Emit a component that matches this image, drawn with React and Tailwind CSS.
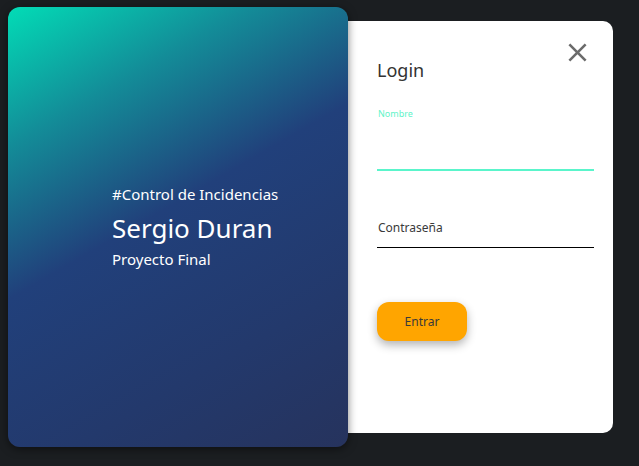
import React from "react";

export default function App() {
  return (
    <div className="w-[639px] h-[466px] bg-[#1b1e21] overflow-hidden" style={{ fontFamily: '"Noto Sans", "Open Sans", sans-serif' }}>
      <div className="flex items-start pt-[7px] pl-2">
        <div className="relative z-10 w-[340px] h-[440px] rounded-[12px] shadow-[0_2px_8px_rgba(0,0,0,0.5)] bg-[linear-gradient(150deg,#02dcb6_0%,#138c98_22%,#21407b_46%,#23396c_75%,#26335d_100%)] flex flex-col justify-center pl-[104px] text-white">
          <div className="text-[15px] leading-[20px]">#Control de Incidencias</div>
          <div className="text-[26px] leading-[36px] mt-[6px]">Sergio Duran</div>
          <div className="text-[15px] leading-[22px] mt-[2px]">Proyecto Final</div>
        </div>
        <div className="relative w-[265px] h-[412px] mt-[14px] bg-white rounded-r-[10px] pl-[29px] pr-[19px]">
          <svg className="absolute right-[20px] top-[16px] w-[31px] h-[31px]" viewBox="0 0 24 24" fill="#6b6b6b">
            <path d="M19 6.41 17.59 5 12 10.59 6.41 5 5 6.41 10.59 12 5 17.59 6.41 19 12 13.41 17.59 19 19 17.59 13.41 12z" />
          </svg>
          <div className="pt-[37px] text-[18px] leading-[24px] text-[#333]">Login</div>
          <div className="mt-[26px] text-[9px] leading-[12px] text-[#62f3c8] pl-[1px]">Nombre</div>
          <div className="mt-[49px] h-[2px] bg-[#5af5cb]" />
          <div className="mt-[49px] text-[12px] leading-[16px] text-[#3a3a3a] pl-[1px]">Contraseña</div>
          <div className="mt-[11px] h-[1px] bg-black" />
          <button className="mt-[54px] w-[90px] h-[39px] rounded-[12px] bg-[#ffa500] text-[12px] text-[#3a3a3a] shadow-[0_4px_10px_rgba(0,0,0,0.3)]">Entrar</button>
        </div>
      </div>
    </div>
  );
}
